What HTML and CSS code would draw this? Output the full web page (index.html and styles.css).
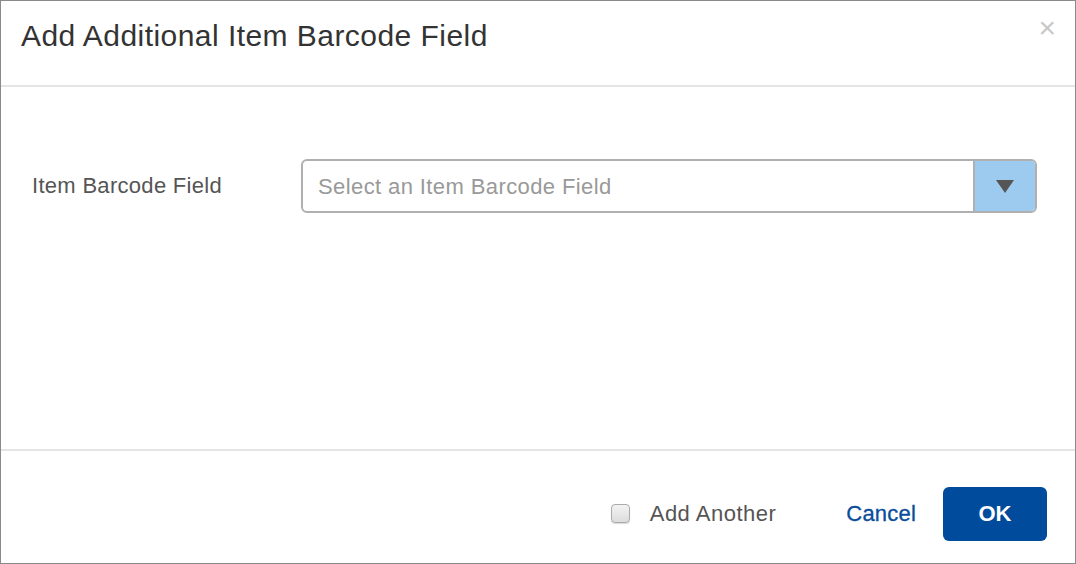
FILE: index.html
```html
<!DOCTYPE html>
<html>
<head>
<meta charset="utf-8">
<link rel="stylesheet" href="styles.css">
</head>
<body>
<div class="dialog">
  <div class="header">
    <h1 class="title">Add Additional Item Barcode Field</h1>
    <span class="close">&times;</span>
  </div>
  <div class="body">
    <div class="row">
      <label class="label">Item Barcode Field</label>
      <div class="select">
        <span class="placeholder">Select an Item Barcode Field</span>
        <span class="arrow"><svg width="18" height="13" viewBox="0 0 18 13"><polygon points="0,0 18,0 9,13" fill="#555"/></svg></span>
      </div>
    </div>
  </div>
  <div class="footer">
    <label class="check"><span class="box"></span><span class="check-text">Add Another</span></label>
    <a class="cancel">Cancel</a>
    <button class="ok">OK</button>
  </div>
</div>
</body>
</html>
```
FILE: styles.css
```css
* { box-sizing: border-box; }
html, body { margin: 0; padding: 0; }
body { font-family: "Liberation Sans", Arial, sans-serif; background: #fff; }
.dialog {
  width: 1076px; height: 564px;
  border: 1px solid #8a8a8a;
  display: flex; flex-direction: column;
  background: #fff;
}
.header {
  height: 86px;
  border-bottom: 2px solid #e5e5e5;
  display: flex; align-items: flex-start; justify-content: space-between;
  padding: 0 19px 0 20px;
}
.title {
  margin: 18px 0 0 0;
  font-size: 30px; font-weight: normal; color: #333;
  line-height: 34px; letter-spacing: 0.45px;
}
.close {
  color: #c8c8c8; font-size: 30px; line-height: 30px; margin-top: 12px;
}
.body { flex: 1; padding: 72px 38px 0 31px; }
.row { display: flex; align-items: center; }
.label { width: 269px; font-size: 22px; color: #555; margin-top: 0; letter-spacing: 0.3px; }
.select {
  flex: 1; height: 54px;
  border: 2px solid #b0b0b0; border-radius: 6px;
  display: flex; align-items: stretch; overflow: hidden;
}
.placeholder { flex: 1; font-size: 22px; color: #999; padding: 2px 0 0 15px; display: flex; align-items: center; letter-spacing: 0.4px; }
.arrow {
  width: 62px; background: #9ccbef; border-left: 2px solid #b0b0b0;
  display: flex; align-items: center; justify-content: center;
}
.footer {
  height: 114px;
  border-top: 2px solid #e5e5e5;
  display: flex; align-items: center; justify-content: flex-end;
  padding: 13px 28px 0 0;
}
.check { display: flex; align-items: center; margin-right: 70px; }
.box {
  width: 19px; height: 19px; border: 1px solid #aaa; border-radius: 4px;
  background: linear-gradient(#f3f3f3, #dcdcdc);
  box-shadow: 0 1px 1px rgba(0,0,0,0.15);
  margin-right: 20px;
}
.check-text { font-size: 22px; color: #555; letter-spacing: 0.5px; }
.cancel { color: #0a4c9a; font-size: 22px; margin-right: 27px; letter-spacing: 0.2px; -webkit-text-stroke: 0.3px #0a4c9a; }
.ok {
  width: 104px; height: 54px; border: none; border-radius: 6px;
  background: #004b9c; color: #fff; font-family: inherit;
  font-size: 22px; font-weight: bold;
}
```
